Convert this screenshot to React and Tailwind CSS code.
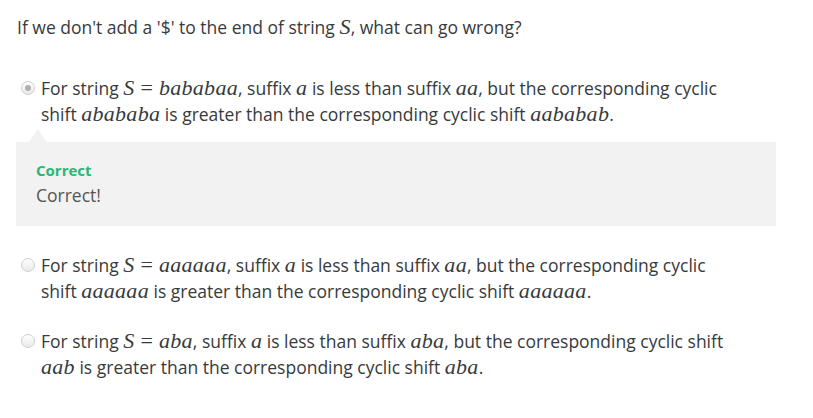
import React from "react";

const M = ({ children }) => (
  <span className="italic text-[22px] leading-none tracking-[0.3px]" style={{ fontFamily: '"Liberation Serif", "DejaVu Serif", serif' }}>
    {children}
  </span>
);
const Eq = () => (
  <span className="text-[22px] leading-none mx-[6px]" style={{ fontFamily: '"Liberation Serif", "DejaVu Serif", serif' }}>=</span>
);

const Radio = ({ checked }) => (
  <span className="mt-[6px] w-[14px] h-[14px] rounded-full border border-[#cfcfcf] bg-gradient-to-b from-[#ffffff] to-[#e9e9e9] flex items-center justify-center shrink-0">
    {checked && <span className="w-[6px] h-[6px] rounded-full bg-[#b0b0b0]" />}
  </span>
);

const Option = ({ checked, line1, line2 }) => (
  <div className="flex gap-[6px] pl-[4px]">
    <Radio checked={checked} />
    <div className="text-[17.5px] leading-[26px] text-[#373a3c]">
      <div className="whitespace-nowrap">{line1}</div>
      <div className="whitespace-nowrap">{line2}</div>
    </div>
  </div>
);

export default function App() {
  return (
    <div className="w-[813px] h-[418px] bg-white pl-[17px] pt-[15px]" style={{ fontFamily: '"Open Sans", sans-serif' }}>
      <div className="text-[17.5px] leading-[24px] text-[#373a3c]">
        If we don't add a '$' to the end of string <M>S</M>, what can go wrong?
      </div>

      <div className="mt-[36px]">
        <Option
          checked
          line1={<>For string <M>S</M><Eq /><M>bababaa</M>, suffix <M>a</M> is less than suffix <M>aa</M>, but the corresponding cyclic</>}
          line2={<>shift <M>abababa</M> is greater than the corresponding cyclic shift <M>aababab</M>.</>}
        />
      </div>

      <div className="relative mt-[15px] ml-[-1px] w-[760px] bg-[#f2f2f2] pl-[20px] pt-[18px] pb-[19px]">
        <div className="absolute left-[13px] top-[-13px] w-0 h-0 border-l-[9px] border-r-[9px] border-b-[13px] border-l-transparent border-r-transparent border-b-[#f2f2f2]" />
        <div className="text-[15px] leading-[20px] font-bold text-[#2bb673]">Correct</div>
        <div className="mt-[3px] text-[17.5px] leading-[24px] text-[#555555]">Correct!</div>
      </div>

      <div className="mt-[26px]">
        <Option
          line1={<>For string <M>S</M><Eq /><M>aaaaaa</M>, suffix <M>a</M> is less than suffix <M>aa</M>, but the corresponding cyclic</>}
          line2={<>shift <M>aaaaaa</M> is greater than the corresponding cyclic shift <M>aaaaaa</M>.</>}
        />
      </div>

      <div className="mt-[24px]">
        <Option
          line1={<>For string <M>S</M><Eq /><M>aba</M>, suffix <M>a</M> is less than suffix <M>aba</M>, but the corresponding cyclic shift</>}
          line2={<><M>aab</M> is greater than the corresponding cyclic shift <M>aba</M>.</>}
        />
      </div>
    </div>
  );
}
